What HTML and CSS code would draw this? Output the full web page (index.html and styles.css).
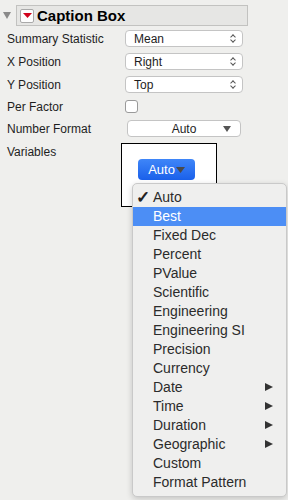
FILE: index.html
```html
<!DOCTYPE html>
<html lang="en">
<head>
    <meta charset="UTF-8">
    <meta name="viewport" content="width=device-width, initial-scale=1.0">
    <title>Caption Box</title>
    <link rel="stylesheet" href="styles.css">
</head>
<body>
    <div class="outline">
        <svg class="disclose" width="8" height="7" viewBox="0 0 8 7"><path d="M0 0H8L4 7Z" fill="#8a8a8a"/></svg>
        <div class="title-box">
            <span class="red-btn">
                <svg width="9" height="5" viewBox="0 0 9 5"><path d="M0 0H9L4.5 5Z" fill="#d0021b"/></svg>
            </span>
            <span class="title">Caption Box</span>
        </div>
    </div>

    <div class="form">
        <div class="row">
            <span class="label">Summary Statistic</span>
            <div class="select"><span>Mean</span><span class="updown"></span></div>
        </div>
        <div class="row">
            <span class="label">X Position</span>
            <div class="select"><span>Right</span><span class="updown"></span></div>
        </div>
        <div class="row">
            <span class="label">Y Position</span>
            <div class="select"><span>Top</span><span class="updown"></span></div>
        </div>
        <div class="row short">
            <span class="label">Per Factor</span>
            <span class="checkbox"></span>
        </div>
        <div class="row">
            <span class="label">Number Format</span>
            <div class="format-btn"><span>Auto</span><svg width="8" height="6" viewBox="0 0 8 6"><path d="M0 0H8L4 6Z" fill="#555"/></svg></div>
        </div>
        <div class="row top">
            <span class="label">Variables</span>
            <div class="var-box">
                <div class="blue-btn">Auto<svg width="9" height="6" viewBox="0 0 9 6"><path d="M0 0H9L4.5 6Z" fill="#4a4a4a"/></svg></div>
            </div>
        </div>
    </div>

    <div class="menu">
        <div class="item"><span class="check">&#10003;</span>Auto</div>
        <div class="item active">Best</div>
        <div class="item">Fixed Dec</div>
        <div class="item">Percent</div>
        <div class="item">PValue</div>
        <div class="item">Scientific</div>
        <div class="item">Engineering</div>
        <div class="item">Engineering SI</div>
        <div class="item">Precision</div>
        <div class="item">Currency</div>
        <div class="item sub">Date<span class="arrow"></span></div>
        <div class="item sub">Time<span class="arrow"></span></div>
        <div class="item sub">Duration<span class="arrow"></span></div>
        <div class="item sub">Geographic<span class="arrow"></span></div>
        <div class="item">Custom</div>
        <div class="item">Format Pattern</div>
    </div>
</body>
</html>
```

FILE: styles.css
```css
body {
    margin: 0;
    background: #efefed;
    font-family: "Liberation Sans", Arial, sans-serif;
    color: #1e1e1e;
    position: relative;
    height: 500px;
    overflow: hidden;
}

.outline {
    display: flex;
    align-items: center;
    padding: 5px 0 0 3px;
}

.disclose {
    margin-right: 5px;
}

.title-box {
    display: flex;
    align-items: center;
    width: 230px;
    height: 19px;
    background: #e6e6e4;
    border: 1px solid #c2c2c0;
}

.red-btn {
    display: flex;
    align-items: center;
    justify-content: center;
    width: 12px;
    height: 12px;
    margin: 0 3px;
    background: #fdfdfd;
    border: 1px solid #a9a9a9;
    border-radius: 2px;
}

.title {
    font-weight: bold;
    font-size: 15px;
    color: #000;
}

.form {
    padding: 1px 0 0 7px;
}

.row {
    display: flex;
    align-items: center;
    height: 23px;
}

.row.short {
    height: 21px;
}

.row.top {
    align-items: flex-start;
}

.label {
    width: 118px;
    font-size: 12px;
}

.row.top .label {
    padding-top: 5px;
}

.select {
    display: flex;
    align-items: center;
    justify-content: space-between;
    box-sizing: border-box;
    width: 118px;
    height: 17px;
    padding: 0 6px 0 8px;
    background: #fff;
    border: 1px solid #c4c4c4;
    border-radius: 4px;
    font-size: 12px;
}

/* up/down chevrons of the select */
.updown {
    position: relative;
    width: 6px;
    height: 9px;
}

.updown::before,
.updown::after {
    content: "";
    position: absolute;
    left: 1px;
    width: 4px;
    height: 4px;
    border: solid #555;
    border-width: 1.3px 1.3px 0 0;
    box-sizing: border-box;
}

.updown::before {
    top: 1px;
    transform: rotate(-45deg);
}

.updown::after {
    top: 4px;
    transform: rotate(135deg);
}

.checkbox {
    width: 11px;
    height: 11px;
    background: #fff;
    border: 1px solid #9a9a9a;
    border-radius: 3px;
}

.format-btn {
    display: flex;
    align-items: center;
    justify-content: center;
    position: relative;
    box-sizing: border-box;
    width: 114px;
    height: 17px;
    margin-left: 2px;
    background: #fff;
    border: 1px solid #c4c4c4;
    border-radius: 4px;
    font-size: 12px;
}

.format-btn svg {
    position: absolute;
    right: 9px;
    top: 5px;
}

.var-box {
    box-sizing: border-box;
    width: 96px;
    height: 64px;
    margin: 3px 0 0 -4px;
    padding: 15px 0 0 16px;
    background: #fff;
    border: 1px solid #000;
}

.blue-btn {
    display: flex;
    align-items: center;
    justify-content: center;
    width: 57px;
    height: 21px;
    border-radius: 4px;
    background: linear-gradient(#3f86f8, #1a60ea);
    color: #fff;
    font-size: 13px;
}

.blue-btn svg {
    margin-left: 1px;
}

.menu {
    position: absolute;
    left: 132px;
    top: 183px;
    width: 155px;
    padding: 4px 0;
    background: #efefee;
    border: 1px solid #c9c9c9;
    border-radius: 5px;
    box-shadow: 0 2px 6px rgba(0, 0, 0, 0.18);
    box-sizing: border-box;
}

.item {
    position: relative;
    height: 19px;
    line-height: 19px;
    padding-left: 20px;
    font-size: 14px;
    color: #2b2b2b;
}

.item.active {
    background: #4c8ef5;
    color: #fff;
}

.check {
    position: absolute;
    left: 3px;
    font-size: 17px;
    font-weight: bold;
    color: #222;
}

.arrow {
    position: absolute;
    right: 13px;
    top: 5px;
    width: 0;
    height: 0;
    border-left: 8px solid #333;
    border-top: 4.5px solid transparent;
    border-bottom: 4.5px solid transparent;
}
```
